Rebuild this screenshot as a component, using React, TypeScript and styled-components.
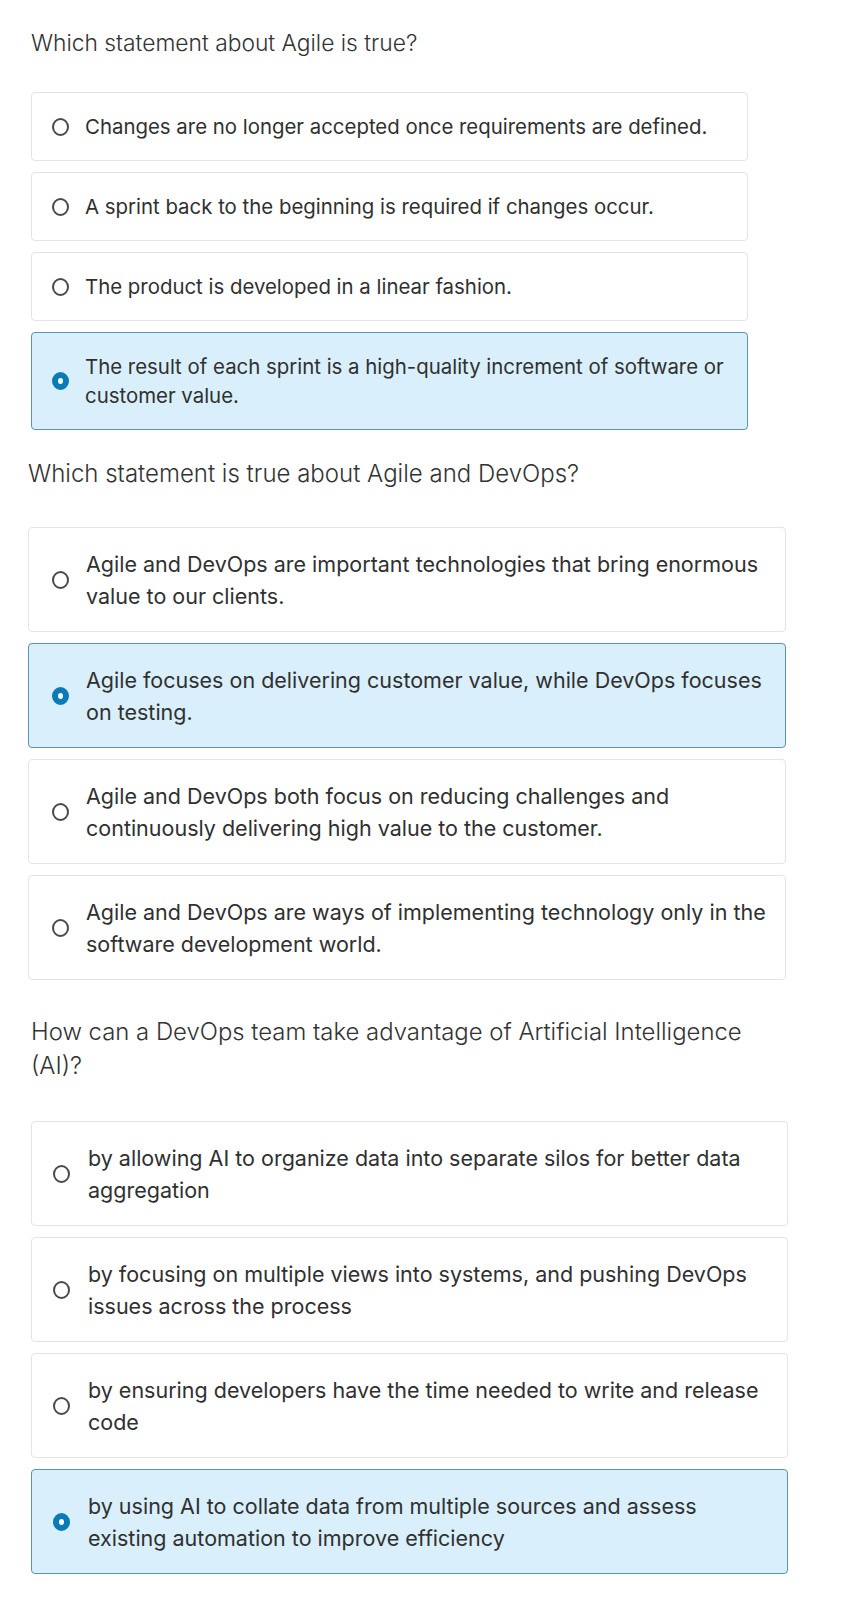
import styled, { createGlobalStyle } from "styled-components";

const GlobalStyle = createGlobalStyle`
  body {
    margin: 0;
    background: #ffffff;
    font-family: Inter, "Liberation Sans", sans-serif;
    color: #2f2f2f;
  }
`;

const Page = styled.main`
  width: 846px;
  padding: 28px 0 32px;
  display: flex;
  flex-direction: column;
`;

const Section = styled.section<{ $left: number; $width: number; $top: number }>`
  margin-left: ${(p) => p.$left}px;
  margin-top: ${(p) => p.$top}px;
  width: ${(p) => p.$width}px;
  display: flex;
  flex-direction: column;
`;

const Title = styled.h2<{ $size: number; $line: number; $after: number }>`
  margin: 0 0 ${(p) => p.$after}px;
  font-size: ${(p) => p.$size}px;
  line-height: ${(p) => p.$line}px;
  font-weight: 300;
  color: #333333;
  white-space: nowrap;
`;

const Options = styled.div`
  display: flex;
  flex-direction: column;
  gap: 11px;
`;

const Card = styled.div<{ $checked: boolean; $padLeft: number; $padY: number; $gapX: number }>`
  display: flex;
  align-items: center;
  gap: ${(p) => p.$gapX}px;
  padding: ${(p) => p.$padY}px 16px ${(p) => p.$padY}px ${(p) => p.$padLeft}px;
  border: 1px solid ${(p) => (p.$checked ? "#5c93ad" : "#e4e4e4")};
  border-radius: 4px;
  background: ${(p) => (p.$checked ? "#d9effb" : "#ffffff")};
`;

const Radio = styled.span<{ $checked: boolean }>`
  flex: none;
  box-sizing: border-box;
  width: 17px;
  height: 18px;
  border-radius: 50%;
  border: ${(p) => (p.$checked ? "6px solid #0b7bb8" : "2.5px solid #4a4a4a")};
  background: #ffffff;
`;

const Label = styled.div<{ $size: number; $line: number }>`
  font-size: ${(p) => p.$size}px;
  line-height: ${(p) => p.$line}px;
  color: #303030;
`;

const Line = styled.span`
  display: block;
  white-space: nowrap;
`;

type Quiz = {
  title: string[];
  left: number;
  width: number;
  top: number;
  titleSize: number;
  titleLine: number;
  titleAfter: number;
  padLeft: number;
  padY: number;
  gapX: number;
  size: number;
  line: number;
  answer: number;
  options: string[][];
};

const quizzes: Quiz[] = [
  {
    title: ["Which statement about Agile is true?"],
    left: 31,
    width: 717,
    top: 0,
    titleSize: 22.8,
    titleLine: 30,
    titleAfter: 34,
    padLeft: 20,
    padY: 19,
    gapX: 16,
    size: 20.4,
    line: 29,
    answer: 3,
    options: [
      ["Changes are no longer accepted once requirements are defined."],
      ["A sprint back to the beginning is required if changes occur."],
      ["The product is developed in a linear fashion."],
      ["The result of each sprint is a high-quality increment of software or", "customer value."],
    ],
  },
  {
    title: ["Which statement is true about Agile and DevOps?"],
    left: 28,
    width: 758,
    top: 29,
    titleSize: 24,
    titleLine: 30,
    titleAfter: 38,
    padLeft: 23,
    padY: 19.5,
    gapX: 17,
    size: 21.5,
    line: 32,
    answer: 1,
    options: [
      ["Agile and DevOps are important technologies that bring enormous", "value to our clients."],
      ["Agile focuses on delivering customer value, while DevOps focuses", "on testing."],
      ["Agile and DevOps both focus on reducing challenges and", "continuously delivering high value to the customer."],
      ["Agile and DevOps are ways of implementing technology only in the", "software development world."],
    ],
  },
  {
    title: ["How can a DevOps team take advantage of Artificial Intelligence", "(AI)?"],
    left: 31,
    width: 757,
    top: 35,
    titleSize: 23.9,
    titleLine: 34,
    titleAfter: 38,
    padLeft: 21,
    padY: 19.5,
    gapX: 18,
    size: 21.5,
    line: 32,
    answer: 3,
    options: [
      ["by allowing AI to organize data into separate silos for better data", "aggregation"],
      ["by focusing on multiple views into systems, and pushing DevOps", "issues across the process"],
      ["by ensuring developers have the time needed to write and release", "code"],
      ["by using AI to collate data from multiple sources and assess", "existing automation to improve efficiency"],
    ],
  },
];

const App = () => {
  return (
    <>
      <GlobalStyle />
      <Page>
        {quizzes.map((quiz, idx: number) => (
          <Section key={idx} $left={quiz.left} $width={quiz.width} $top={quiz.top}>
            <Title $size={quiz.titleSize} $line={quiz.titleLine} $after={quiz.titleAfter}>
              {quiz.title.map((t, i) => (
                <Line key={i}>{t}</Line>
              ))}
            </Title>
            <Options>
              {quiz.options.map((option, i: number) => {
                const checked = i === quiz.answer;
                return (
                  <Card
                    key={i}
                    $checked={checked}
                    $padLeft={quiz.padLeft}
                    $padY={quiz.padY}
                    $gapX={quiz.gapX}
                  >
                    <Radio $checked={checked} />
                    <Label $size={quiz.size} $line={quiz.line}>
                      {option.map((l, j) => (
                        <Line key={j}>{l}</Line>
                      ))}
                    </Label>
                  </Card>
                );
              })}
            </Options>
          </Section>
        ))}
      </Page>
    </>
  );
};

export default App;
